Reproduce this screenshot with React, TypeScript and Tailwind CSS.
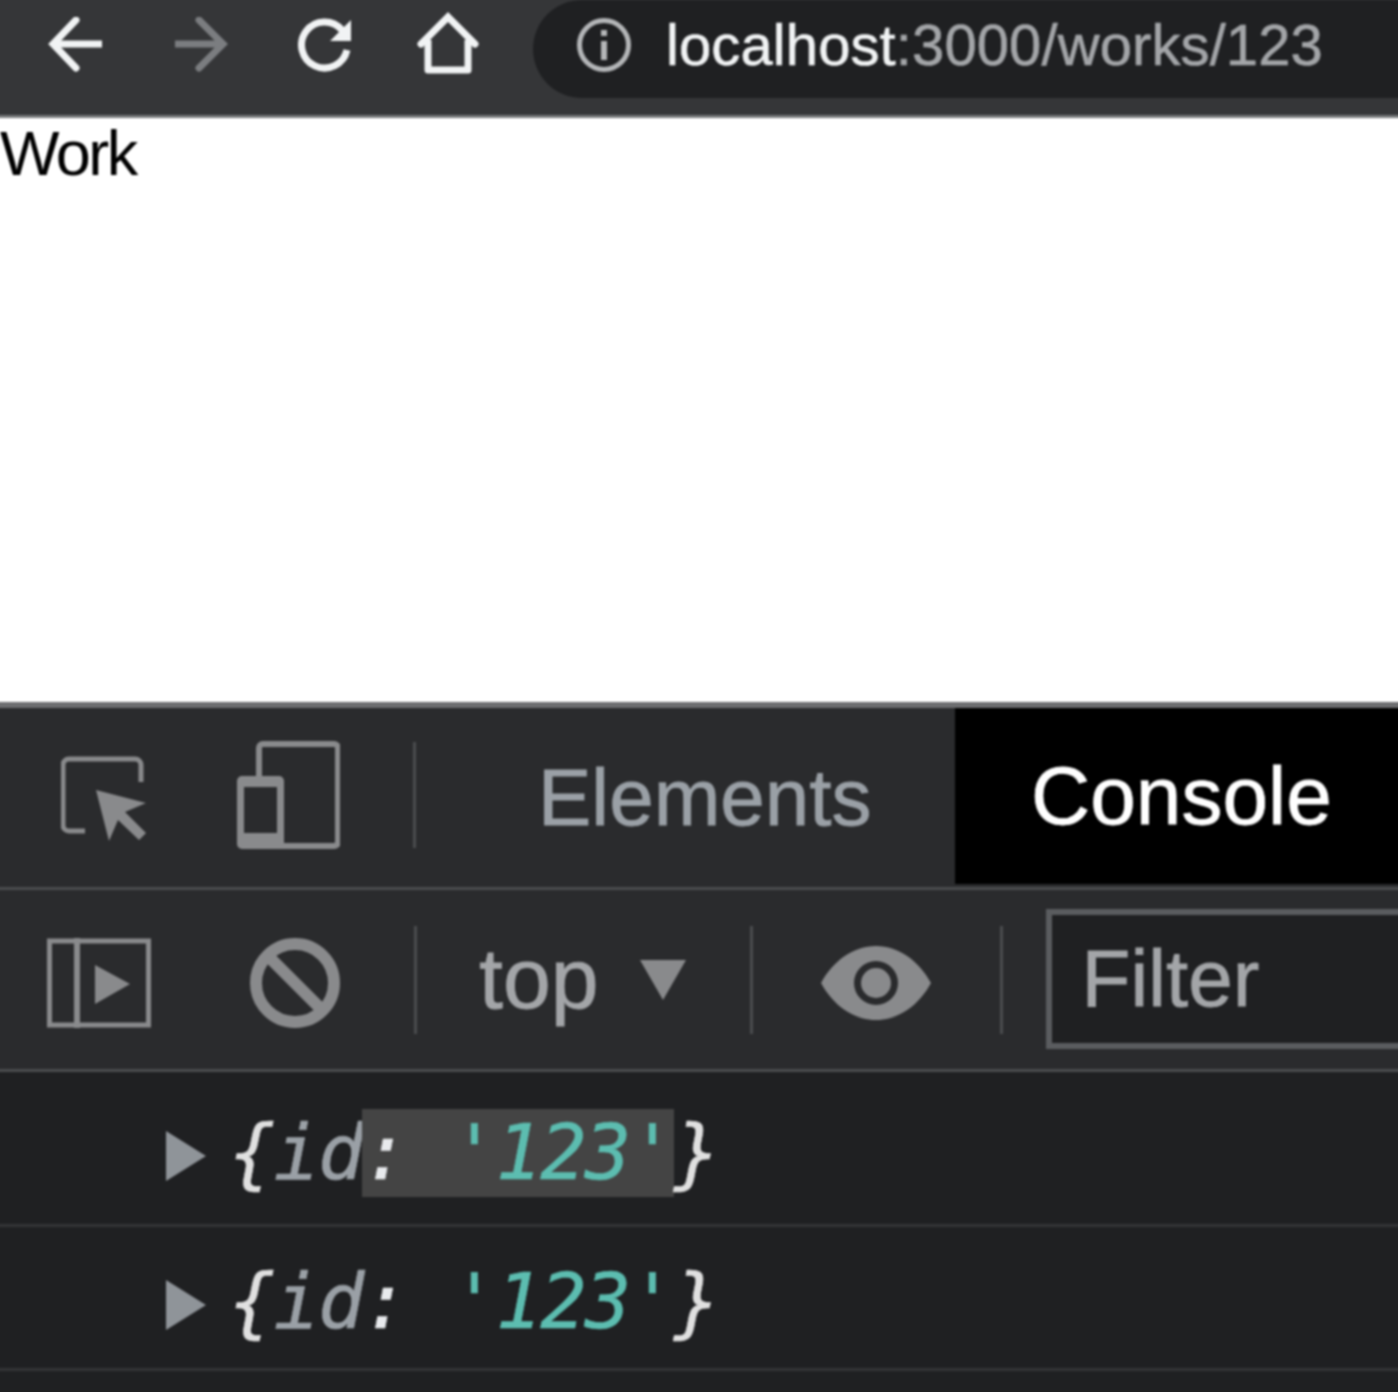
import React from "react";

const sans = "font-['Liberation_Sans',Arial,sans-serif]";

function Separator({ className = "" }: { className?: string }) {
  return <div className={`w-[3px] bg-[#4a4c4e] ${className}`} />;
}

function BackArrow() {
  return (
    <svg width="56" height="56" viewBox="0 0 56 56" fill="none" stroke="#f1f3f4" strokeWidth="7" strokeLinejoin="miter">
      <path d="M54 27H7" />
      <path d="M28 3 5 27l23 24" strokeLinecap="round" />
    </svg>
  );
}

function ForwardArrow() {
  return (
    <svg width="56" height="56" viewBox="0 0 56 56" fill="none" stroke="#7b7d80" strokeWidth="7">
      <path d="M2 27h47" />
      <path d="M26 3l24 24-24 24" strokeLinecap="round" />
    </svg>
  );
}

function Reload() {
  return (
    <svg width="56" height="56" viewBox="0 0 56 56" fill="none">
      <path d="M44 13A23 23 0 1 0 49 33" stroke="#f1f3f4" strokeWidth="7" />
      <path d="M53 3v21H32z" fill="#f1f3f4" />
    </svg>
  );
}

function Home() {
  return (
    <svg width="64" height="62" viewBox="0 0 64 62" fill="none" stroke="#f1f3f4" strokeWidth="7">
      <path d="M5 32 32 5l27 27" strokeLinecap="round" />
      <path d="M12 28v30h40V28" strokeLinejoin="round" />
    </svg>
  );
}

function InfoIcon() {
  return (
    <svg width="56" height="56" viewBox="0 0 56 56" fill="none">
      <circle cx="28" cy="28" r="24.5" stroke="#b4b6b8" strokeWidth="5" />
      <rect x="25" y="13" width="6" height="6" fill="#b4b6b8" />
      <rect x="25" y="24" width="6" height="19" fill="#b4b6b8" />
    </svg>
  );
}

function Inspect() {
  return (
    <svg width="88" height="88" viewBox="0 0 88 88" fill="none">
      <path d="M24 75H8a6 6 0 0 1-6-6V9a6 6 0 0 1 6-6h66a6 6 0 0 1 6 6v17" stroke="#898a8c" strokeWidth="5" />
      <path d="M35 34l50 13-21 9 21 21-7 7-21-20-9 21z" fill="#898a8c" />
    </svg>
  );
}

function DeviceToggle() {
  return (
    <svg width="104" height="108" viewBox="0 0 104 108" fill="none">
      <path d="M23 36V7a4 4 0 0 1 4-4h71a4 4 0 0 1 4 4v94a4 4 0 0 1-4 4H48" stroke="#898a8c" strokeWidth="6" />
      <path d="M6 35h37a5 5 0 0 1 5 5v68H6a5 5 0 0 1-5-5V40a5 5 0 0 1 5-5zm2 11v46h33V46z" fill="#898a8c" fillRule="evenodd" />
    </svg>
  );
}

function SidebarToggle() {
  return (
    <svg width="104" height="90" viewBox="0 0 104 90" fill="none">
      <rect x="2.5" y="3" width="99" height="84" stroke="#898a8c" strokeWidth="5" />
      <path d="M30 0v90" stroke="#898a8c" strokeWidth="6" />
      <path d="M48 27l35 19-35 20z" fill="#898a8c" />
    </svg>
  );
}

function ClearConsole() {
  return (
    <svg width="90" height="90" viewBox="0 0 90 90" fill="none" stroke="#898a8c" strokeWidth="12">
      <circle cx="45" cy="45" r="39" />
      <path d="M18 18l54 54" />
    </svg>
  );
}

function Eye() {
  return (
    <svg width="110" height="74" viewBox="0 0 110 74">
      <path
        d="M0 37C12 15 32 0 55 0s43 15 55 37C98 59 78 74 55 74S12 59 0 37zm55-22a22 22 0 1 0 0 44 22 22 0 0 0 0-44z"
        fill="#898a8c"
        fillRule="evenodd"
      />
      <circle cx="55" cy="37" r="15" fill="#898a8c" />
    </svg>
  );
}

function LogRow({ selected, className = "" }: { selected?: boolean; className?: string }) {
  const rest = (
    <>
      <span className="text-[#e8eaed]">:</span>
      <span> </span>
      <span className="text-[#5cbdb0]">'123'</span>
    </>
  );
  return (
    <div className={`flex items-center border-b-[3px] border-[#333436] pl-[170px] ${className}`}>
      <div className="mt-[6px] mr-[23px] h-0 w-0 border-y-[25px] border-l-[40px] border-y-transparent border-l-[#8f9499]" />
      <div className="font-['DejaVu_Sans_Mono',monospace] text-[77px] leading-[88px] tracking-[-1.9px] whitespace-pre italic [-webkit-text-stroke:0.6px]">
        <span className="text-[#e0e0e0]">{"{"}</span>
        <span className="text-[#9aa0a6]">id</span>
        {selected ? <span className="inline-block bg-[#444444]">{rest}</span> : rest}
        <span className="text-[#e0e0e0]">{"}"}</span>
      </div>
    </div>
  );
}

export default function App() {
  return (
    <div className="h-[1392px] w-[1398px] overflow-hidden bg-[#1f2022]">
      {/* soft like the upscaled capture; oversized by 4px so the blur has no pale rim */}
      <div className={`-mt-[4px] -ml-[4px] flex h-[1400px] w-[1406px] flex-col bg-[#1f2022] blur-[1px] ${sans}`}>
        {/* browser toolbar */}
        <div className="flex h-[122px] shrink-0 items-start border-b-[3px] border-[#77797b] bg-[#353638] pt-[4px]">
          <div className="flex h-[90px] items-center pl-[52px]">
            <BackArrow />
            <div className="ml-[69px]">
              <ForwardArrow />
            </div>
            <div className="ml-[69px]">
              <Reload />
            </div>
            <div className="mb-[4px] ml-[62px]">
              <Home />
            </div>
          </div>
          <div className="ml-[53px] flex h-[98px] flex-1 items-center rounded-l-[50px] bg-[#1f2022] pl-[43px] text-[58px] leading-none">
            <div className="mb-[8px]">
              <InfoIcon />
            </div>
            <div className="mb-[8px] ml-[34px] tracking-[0.1px] [-webkit-text-stroke:0.6px]">
              <span className="text-[#f1f3f4]">localhost</span>
              <span className="text-[#a3a5a8]">:3000/works/123</span>
            </div>
          </div>
        </div>

        {/* page */}
        <div className="h-[584px] shrink-0 bg-white pl-[4px] text-[63px] leading-[70px] tracking-[-2.5px] text-black">
          Work
        </div>

        {/* tab bar */}
        <div className="flex h-[188px] shrink-0 border-t-[6px] border-b-[3px] border-t-[#6d6e70] border-b-[#4a4c4e] bg-[#2a2b2d]">
          <div className="flex flex-1 items-center">
            <div className="mt-[4px] ml-[65px]">
              <Inspect />
            </div>
            <div className="mb-[6px] ml-[87px]">
              <DeviceToggle />
            </div>
            <Separator className="mb-[6px] ml-[73px] h-[106px]" />
            <span className="ml-[122px] text-[80px] leading-none text-[#9aa0a6] [-webkit-text-stroke:0.8px]">Elements</span>
          </div>
          <div className="mb-[3px] flex w-[447px] items-center bg-black pl-[76px] text-[82px] leading-none text-white [-webkit-text-stroke:0.8px]">
            Console
          </div>
        </div>

        {/* console toolbar */}
        <div className="flex h-[182px] shrink-0 items-center border-b-[3px] border-[#4a4c4e] bg-[#2a2b2d] pt-[6px] pl-[51px]">
          <SidebarToggle />
          <div className="ml-[99px]">
            <ClearConsole />
          </div>
          <Separator className="mb-[6px] ml-[74px] h-[108px]" />
          <span className="mb-[10px] ml-[62px] text-[86px] leading-none text-[#a3a5a8] [-webkit-text-stroke:0.8px]">top</span>
          <div className="mb-[6px] ml-[41px] h-0 w-0 border-x-[23px] border-t-[40px] border-x-transparent border-t-[#898a8c]" />
          <Separator className="mb-[6px] ml-[64px] h-[108px]" />
          <div className="ml-[68px]">
            <Eye />
          </div>
          <Separator className="mb-[6px] ml-[69px] h-[108px]" />
          <div className="mb-[8px] ml-[43px] flex h-[140px] flex-1 items-center border-[6px] border-r-0 border-[#5a5c5f] bg-[#1f2022] pl-[30px] text-[80px] leading-none text-[#a3a5a8] [-webkit-text-stroke:0.8px]">
            Filter
          </div>
        </div>

        {/* console output */}
        <div className="flex-1 bg-[#1f2022] pt-[9px]">
          <LogRow selected className="h-[146px]" />
          <LogRow className="h-[144px] pt-[8px]" />
        </div>
      </div>
    </div>
  );
}
